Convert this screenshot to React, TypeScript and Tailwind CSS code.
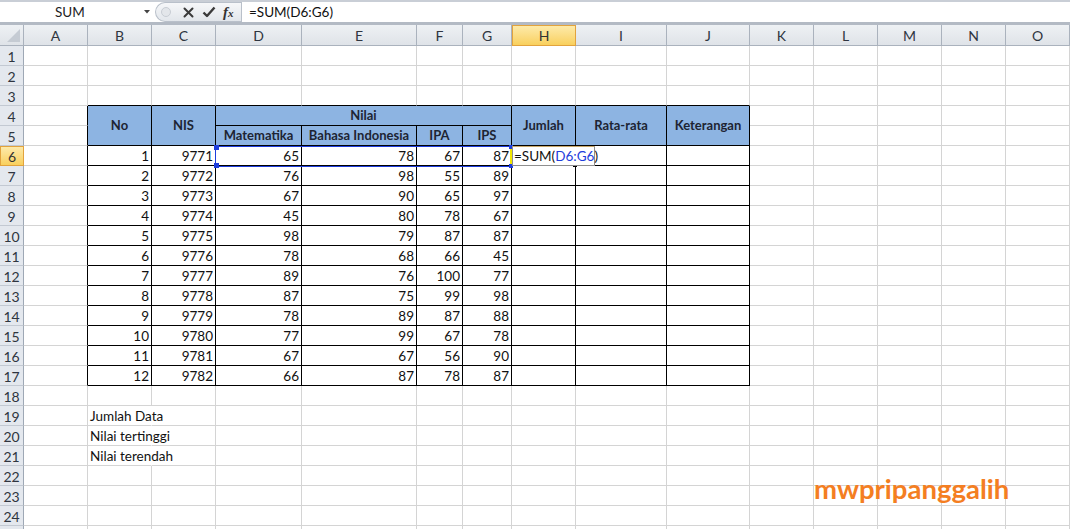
import React from "react";

const COLS = ["A", "B", "C", "D", "E", "F", "G", "H", "I", "J", "K", "L", "M", "N", "O"];
const ROWS = Array.from({ length: 25 }, (_, i) => i + 1);

const DATA = [
  [1, 9771, 65, 78, 67, 87],
  [2, 9772, 76, 98, 55, 89],
  [3, 9773, 67, 90, 65, 97],
  [4, 9774, 45, 80, 78, 67],
  [5, 9775, 98, 79, 87, 87],
  [6, 9776, 78, 68, 66, 45],
  [7, 9777, 89, 76, 100, 77],
  [8, 9778, 87, 75, 99, 98],
  [9, 9779, 78, 89, 87, 88],
  [10, 9780, 77, 99, 67, 78],
  [11, 9781, 67, 67, 56, 90],
  [12, 9782, 66, 87, 78, 87],
];

const LABELS: Record<number, string> = {
  19: "Jumlah Data",
  20: "Nilai tertinggi",
  21: "Nilai terendah",
};

function inTable(r: number, c: number) {
  return r >= 4 && r <= 17 && c >= 2 && c <= 10;
}

function edges(r: number, c: number) {
  const right = inTable(r, c) || inTable(r, c + 1);
  const bottom = inTable(r, c) || inTable(r + 1, c);
  let rc = right ? "border-r-black" : "border-r-[#d4d4d4]";
  // overflowing label text hides the gridline
  if (c === 2 && LABELS[r]) rc = "border-r-transparent";
  const bc = bottom ? "border-b-black" : "border-b-[#d4d4d4]";
  return `border-r border-b ${rc} ${bc}`;
}

function HeadCell({ children, extra = "" }: { children: React.ReactNode; extra?: string }) {
  return (
    <div
      className={`flex items-center justify-center bg-[#8db4e2] pt-[1px] text-[13px] font-bold text-[#1d2433] whitespace-nowrap border-r border-b border-r-black border-b-black ${extra}`}
    >
      {children}
    </div>
  );
}

function FormulaBar() {
  return (
    <div className="flex h-[25px] border-t-2 border-t-[#c9ced6] border-b-[3px] border-b-[#b3bac4] bg-white">
      <div className="flex w-[155px] items-center pl-[55px] pr-[5px] text-[13.5px] text-[#222]">
        <span className="flex-1">SUM</span>
        <svg width="6" height="4" viewBox="0 0 6 4">
          <path d="M0 0h6L3 3.5z" fill="#444" />
        </svg>
      </div>
      <div className="flex w-[86px] items-center rounded-l-full border border-r-0 border-[#b9c0ca] bg-linear-to-b from-[#f6f7f9] to-[#e2e6eb]">
        <span className="ml-[5px] h-[10px] w-[10px] rounded-full border border-[#c8cdd4] bg-[#e3e6ea]" />
        <svg className="ml-[12px]" width="11" height="11" viewBox="0 0 11 11">
          <path d="M1.5 1.5l8 8M9.5 1.5l-8 8" stroke="#3a3a3a" strokeWidth="2" strokeLinecap="round" />
        </svg>
        <svg className="ml-[8px]" width="14" height="12" viewBox="0 0 14 12">
          <path d="M1.5 6.5l3.5 3.5L12.5 1.5" stroke="#3a3a3a" strokeWidth="2.4" fill="none" strokeLinejoin="round" />
        </svg>
        <span className="ml-[7px] font-['Liberation_Serif',serif] text-[15px] italic font-bold text-[#333] leading-none">
          f<span className="text-[11px]">x</span>
        </span>
      </div>
      <div className="flex flex-1 items-center border-l border-[#b9c0ca] pl-[7px] text-[13.5px] text-[#111]">
        =SUM(D6:G6)
      </div>
    </div>
  );
}

// overlays anchored to the cell they belong to
function RangeMarks() {
  return (
    <div className="pointer-events-none absolute -left-px top-0 z-10 h-[21px] w-[297px] border-[1.5px] border-[#1e3ddc]">
      <span className="absolute -left-[2px] -top-[2px] h-[5px] w-[5px] bg-[#1e3ddc]" />
      <span className="absolute -left-[2px] -bottom-[2px] h-[5px] w-[5px] bg-[#1e3ddc]" />
      <span className="absolute -right-[1.5px] top-0 h-full w-[3px] bg-[#f2e600]" />
      <span className="absolute -right-[2px] -top-[2px] h-[4px] w-[4px] bg-[#1e3ddc]" />
      <span className="absolute -right-[2px] -bottom-[2px] h-[4px] w-[4px] bg-[#1e3ddc]" />
    </div>
  );
}

function Editor() {
  return (
    <>
      <div className="absolute top-0 left-0 z-20 flex h-[20px] w-[83px] items-center border border-[#8f8f8f] border-t-[#c9a86a] bg-white pl-[1px] pt-[1px] text-[13.5px] text-[#111] whitespace-nowrap">
        =SUM(<span className="text-[#1e3ddc]">D6:G6</span>)
      </div>
      <span className="absolute -right-[2px] -bottom-[2px] z-10 h-[3px] w-[4px] bg-black" />
    </>
  );
}

function Sheet() {
  const cells: React.ReactNode[] = [];

  // column header row
  cells.push(
    <div key="corner" className="flex items-end justify-end border-r border-b border-[#aab2bd] bg-linear-to-b from-[#eef1f4] to-[#dfe3e8] p-[3px]">
      <svg width="13" height="13" viewBox="0 0 13 13">
        <path d="M13 0V13H0z" fill="#c5cbd3" />
      </svg>
    </div>
  );
  COLS.forEach((col) => {
    const active = col === "H";
    cells.push(
      <div
        key={`h${col}`}
        className={
          active
            ? "flex items-center justify-center border border-[#e2a33d] bg-linear-to-b from-[#fdeaa8] to-[#f9d05c] text-[14px] text-[#333]"
            : "flex items-center justify-center border-r border-b border-[#aab2bd] bg-linear-to-b from-[#eef1f4] to-[#dfe3e8] text-[14px] text-[#2f3540]"
        }
      >
        {col}
      </div>
    );
  });

  ROWS.forEach((r) => {
    const active = r === 6;
    cells.push(
      <div
        key={`r${r}`}
        className={
          active
            ? "flex items-center justify-center border border-[#e2a33d] bg-linear-to-b from-[#fdeaa8] to-[#f9d05c] pt-[1px] text-[14px] text-[#333]"
            : "flex items-center justify-center border-r border-b border-r-[#9ea8b5] border-b-[#c3c9d2] bg-[#e4e8ee] pt-[1px] text-[14px] text-[#2f3540]"
        }
      >
        {r < 25 ? r : null}
      </div>
    );

    for (let c = 1; c <= 15; c++) {
      const key = `${r}-${c}`;
      if (r === 4) {
        if (c === 2) { cells.push(<HeadCell key={key} extra="row-span-2">No</HeadCell>); continue; }
        if (c === 3) { cells.push(<HeadCell key={key} extra="row-span-2">NIS</HeadCell>); continue; }
        if (c === 4) { cells.push(<HeadCell key={key} extra="col-span-4">Nilai</HeadCell>); continue; }
        if (c >= 5 && c <= 7) continue;
        if (c === 8) { cells.push(<HeadCell key={key} extra="row-span-2">Jumlah</HeadCell>); continue; }
        if (c === 9) { cells.push(<HeadCell key={key} extra="row-span-2">Rata-rata</HeadCell>); continue; }
        if (c === 10) { cells.push(<HeadCell key={key} extra="row-span-2">Keterangan</HeadCell>); continue; }
      }
      if (r === 5) {
        if (c === 2 || c === 3 || (c >= 8 && c <= 10)) continue;
        if (c === 4) { cells.push(<HeadCell key={key}>Matematika</HeadCell>); continue; }
        if (c === 5) { cells.push(<HeadCell key={key}>Bahasa Indonesia</HeadCell>); continue; }
        if (c === 6) { cells.push(<HeadCell key={key}>IPA</HeadCell>); continue; }
        if (c === 7) { cells.push(<HeadCell key={key}>IPS</HeadCell>); continue; }
      }

      let content: React.ReactNode = null;
      let align = "";
      if (r >= 6 && r <= 17 && c >= 2 && c <= 7) {
        content = DATA[r - 6][c - 2];
        align = "justify-end pr-[2px]";
      } else if (c === 2 && LABELS[r]) {
        content = LABELS[r];
        align = "pl-[2px]";
      }
      const rangeStart = r === 6 && c === 4;
      const editing = r === 6 && c === 8;
      const watermark = r === 22 && c === 12;
      cells.push(
        <div
          key={key}
          className={`relative flex items-center whitespace-nowrap pt-[2px] text-[13.5px] text-[#111] ${align} ${edges(r, c)}`}
        >
          {content}
          {rangeStart && <RangeMarks />}
          {editing && <Editor />}
          {watermark && (
            <span className="absolute left-0 top-[9px] z-10 text-[27.5px] font-bold leading-none text-[#f47e22]">
              mwpripanggalih
            </span>
          )}
        </div>
      );
    }
  });

  return (
    <div className="grid grid-cols-[24px_64px_64px_64px_86px_115px_46px_49px_64px_91px_83px_64px_64px_64px_64px_64px] grid-rows-[21px] auto-rows-[20px]">
      {cells}
    </div>
  );
}

export default function App() {
  return (
    <div className="h-[529px] w-[1070px] overflow-hidden bg-white font-['Lato','Liberation_Sans',sans-serif]">
      <FormulaBar />
      <Sheet />
    </div>
  );
}
